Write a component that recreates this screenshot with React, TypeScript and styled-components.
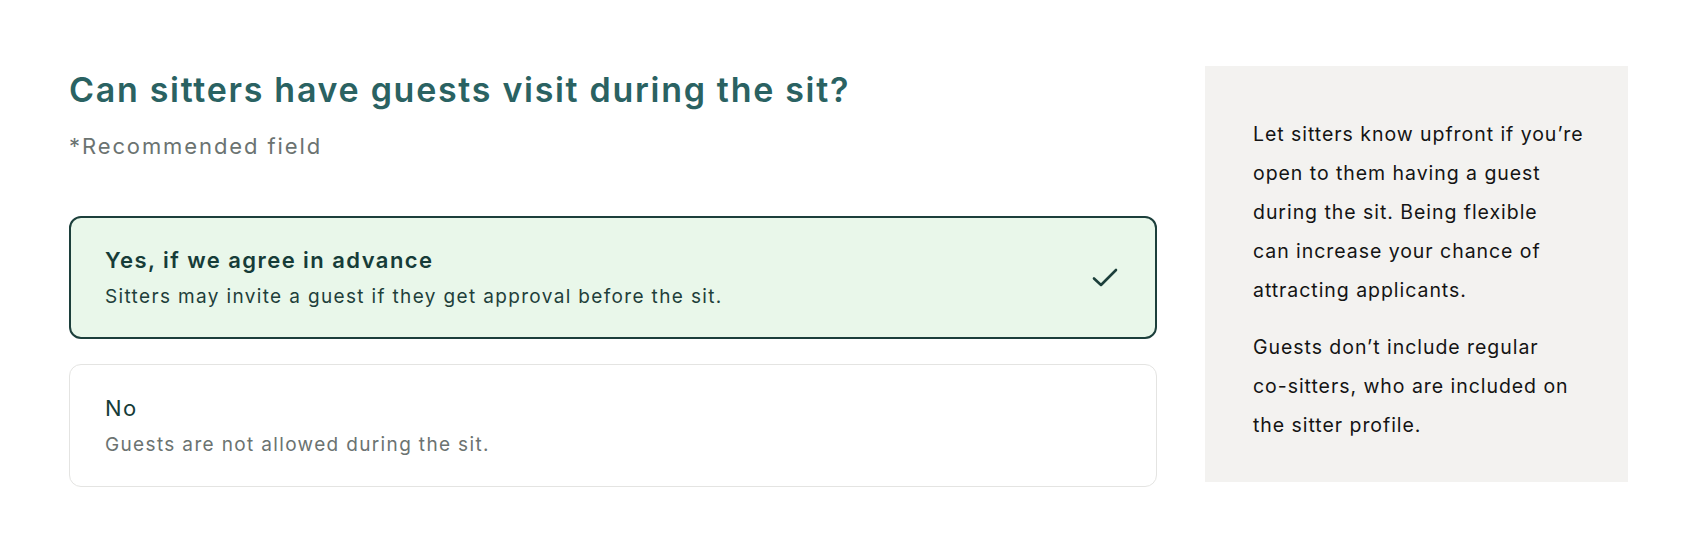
import React from 'react';
import styled, { createGlobalStyle } from 'styled-components';

const GlobalStyle = createGlobalStyle`
  body {
    margin: 0;
    background: #fff;
    font-family: Inter, "Open Sans", sans-serif;
  }
`;

type Option = {
  title: string
  description: string
  selected?: boolean
}

const options: Option[] = [
  {
    title: 'Yes, if we agree in advance',
    description: 'Sitters may invite a guest if they get approval before the sit.',
    selected: true,
  },
  {
    title: 'No',
    description: 'Guests are not allowed during the sit.',
  },
];

const Page = styled.div`
  display: flex;
  align-items: flex-start;
  gap: 48px;
  padding: 66px 0 0 69px;
`;

const Main = styled.div`
  width: 1088px;
  display: flex;
  flex-direction: column;
`;

const Title = styled.h1`
  margin: 3px 0 0;
  font-size: 34px;
  line-height: 42px;
  font-weight: 600;
  letter-spacing: 1.7px;
  color: #2a6262;
`;

const Hint = styled.p`
  margin: 21px 0 0;
  font-size: 22px;
  line-height: 28px;
  letter-spacing: 1.9px;
  color: #6b7371;
`;

const OptionList = styled.div`
  margin-top: 56px;
  display: flex;
  flex-direction: column;
  gap: 25px;
`;

const Card = styled.div<{ $selected?: boolean }>`
  display: flex;
  align-items: center;
  justify-content: space-between;
  height: 123px;
  box-sizing: border-box;
  border-radius: 12px;
  padding: 0 36px 0 34px;
  border: ${({ $selected }) => ($selected ? '2px solid #1c3f3b' : '1px solid #e4e4e2')};
  background: ${({ $selected }) => ($selected ? '#e9f7ea' : '#fff')};
  ${({ $selected }) => !$selected && 'padding-left: 35px;'}
`;

const CardText = styled.div`
  display: flex;
  flex-direction: column;
  gap: 10px;
`;

const CardTitle = styled.div<{ $selected?: boolean }>`
  font-size: 22px;
  line-height: 28px;
  letter-spacing: 1.45px;
  font-weight: ${({ $selected }) => ($selected ? 600 : 400)};
  color: #163c38;
`;

const CardDesc = styled.div<{ $selected?: boolean }>`
  font-size: 19px;
  line-height: 26px;
  letter-spacing: 1.35px;
  color: ${({ $selected }) => ($selected ? '#1f3f3b' : '#6b7371')};
`;

const Check = styled.svg`
  width: 28px;
  height: 28px;
  flex-shrink: 0;
`;

const Aside = styled.aside`
  width: 423px;
  height: 416px;
  box-sizing: border-box;
  background: #f3f2f0;
  padding: 49px 20px 0 48px;
  color: #141414;
  font-size: 19.5px;
  line-height: 39px;
  letter-spacing: 0.95px;
  p {
    margin: 0 0 18px;
    white-space: nowrap;
  }
`;

const CheckIcon = () => (
  <Check viewBox="0 0 28 28" fill="none">
    <polyline
      points="3,14.5 10,21 25,6"
      stroke="#1c3f3b"
      strokeWidth="2.6"
      strokeLinecap="round"
      strokeLinejoin="round"
    />
  </Check>
);

export default function App() {
  return (
    <>
      <GlobalStyle />
      <Page>
        <Main>
          <Title>Can sitters have guests visit during the sit?</Title>
          <Hint>*Recommended field</Hint>
          <OptionList>
            {options.map((o) => (
              <Card key={o.title} $selected={o.selected}>
                <CardText>
                  <CardTitle $selected={o.selected}>{o.title}</CardTitle>
                  <CardDesc $selected={o.selected}>{o.description}</CardDesc>
                </CardText>
                {o.selected && <CheckIcon />}
              </Card>
            ))}
          </OptionList>
        </Main>
        <Aside>
          <p>
            Let sitters know upfront if you’re<br />
            open to them having a guest<br />
            during the sit. Being flexible<br />
            can increase your chance of<br />
            attracting applicants.
          </p>
          <p>
            Guests don’t include regular<br />
            co-sitters, who are included on<br />
            the sitter profile.
          </p>
        </Aside>
      </Page>
    </>
  );
}
